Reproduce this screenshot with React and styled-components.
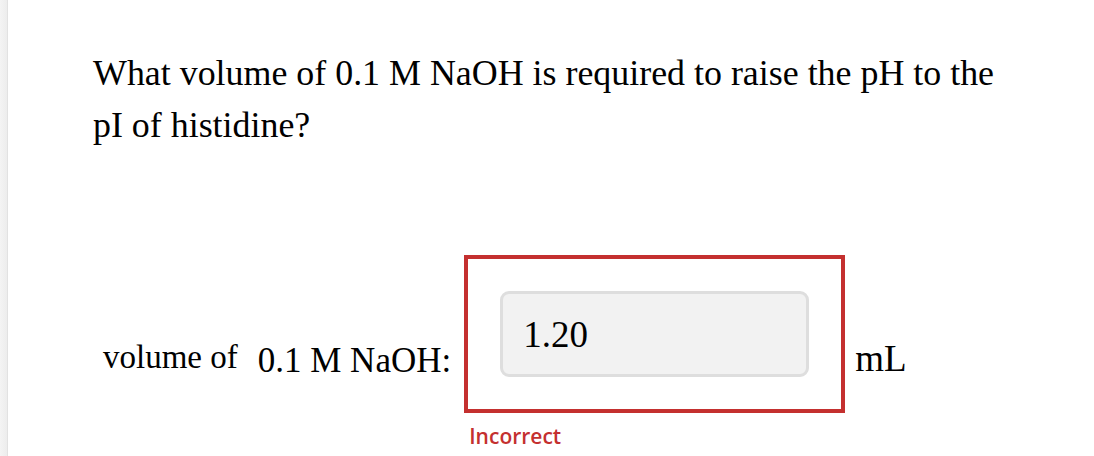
import React from "react";
import styled, { createGlobalStyle } from "styled-components";

const Global = createGlobalStyle`
  html, body { margin: 0; padding: 0; background: #ffffff; }
  body { font-family: "Liberation Serif", "Times New Roman", serif; color: #000; }
`;

const Page = styled.div`
  display: flex;
  min-height: 456px;
  width: 1094px;
  overflow: hidden;
`;

const Strip = styled.div`
  flex: 0 0 7px;
  background: linear-gradient(to right, #f4f4f4, #ededed);
  border-right: 1px solid #e2e2e2;
`;

const Content = styled.main`
  flex: 1;
  padding: 47px 0 0 85px;
`;

const Question = styled.p`
  margin: 0;
  max-width: 935px;
  font-size: 35.9px;
  line-height: 52px;
`;

const AnswerRow = styled.div`
  display: flex;
  align-items: flex-start;
  margin-top: 104px;
`;

const Label = styled.label`
  margin: 82px 13px 0 10px;
  font-size: 33px;
  line-height: 40px;
  white-space: nowrap;
`;

const Math = styled.span`
  font-size: ${(p) => p.$size || 35}px;
  margin-left: 20px;
  position: relative;
  top: 4px;
`;

const AnswerColumn = styled.div`
  display: flex;
  flex-direction: column;
`;

const FeedbackBox = styled.div`
  border: 4px solid ${(p) => (p.$wrong ? "#c4302f" : "#2e7d32")};
  padding: 32px;
`;

const Field = styled.input`
  box-sizing: border-box;
  width: 309px;
  height: 86px;
  margin: 0;
  padding: 0 20px;
  border: 3px solid #dedede;
  border-radius: 9px;
  background: #f2f2f2;
  font-family: "Liberation Serif", "Times New Roman", serif;
  font-size: 37px;
  color: #000;
  outline: none;
`;

const Feedback = styled.div`
  margin: 10px 0 0 5px;
  font-family: "Open Sans", "Noto Sans", sans-serif;
  font-weight: 600;
  font-size: 21px;
  line-height: 27px;
  color: #c4302f;
`;

const Unit = styled.span`
  margin: 84px 0 0 10px;
  font-size: 37px;
  line-height: 40px;
`;

export default function App() {
  return (
    <>
      <Global />
      <Page>
        <Strip />
        <Content>
          <Question>
            What volume of 0.1 M NaOH is required to raise the pH to the pI of
            histidine?
          </Question>
          <AnswerRow>
            <Label htmlFor="naoh">
              volume of<Math>0.1 M NaOH:</Math>
            </Label>
            <AnswerColumn>
              <FeedbackBox $wrong>
                <Field id="naoh" defaultValue="1.20" readOnly />
              </FeedbackBox>
              <Feedback>Incorrect</Feedback>
            </AnswerColumn>
            <Unit>mL</Unit>
          </AnswerRow>
        </Content>
      </Page>
    </>
  );
}
